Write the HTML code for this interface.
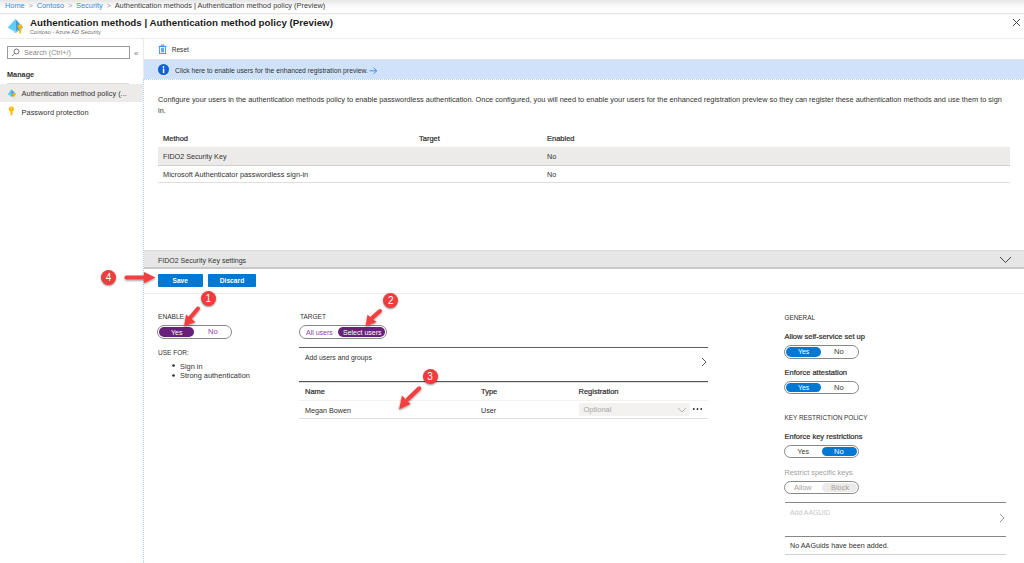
<!DOCTYPE html>
<html><head><meta charset="utf-8">
<style>
*{box-sizing:border-box;margin:0;padding:0}
html,body{width:1024px;height:563px;overflow:hidden;background:#fff}
body{font-family:"Liberation Sans",sans-serif;color:#323130;font-size:7.4px;position:relative}
.a{position:absolute;white-space:nowrap;line-height:1}
.b{font-weight:bold}
.sb{font-weight:normal;-webkit-text-stroke:.22px currentColor}
.ln{position:absolute;height:1px}
.tg{position:absolute;border:1px solid #8a8886;border-radius:7px;background:#fff}
.pill{position:absolute;border-radius:6px}
.circ{position:absolute;width:15px;height:15px;border-radius:50%;background:#f03c3c;color:#fff;font-size:10px;text-align:center;line-height:15px;box-shadow:0 1px 2px rgba(0,0,0,.45)}
</style></head>
<body>
<!-- breadcrumb -->
<div style="position:absolute;left:0;top:0;width:1024px;height:13px;background:linear-gradient(#e6e6e6 0,#f8f8f8 5px,#fff 10px)"></div>
<div class="ln" style="left:0;top:13px;width:1024px;background:#e6e6e6;box-shadow:0 1px 1px rgba(0,0,0,.04)"></div>
<div class="a" style="left:5px;top:1.8px;font-size:7.4px;color:#3c3c3c">
<span style="color:#3a8ad8">Home</span><span style="color:#a19f9d;padding:0 3.7px 0 3.9px">&gt;</span><span style="color:#3a8ad8">Contoso</span><span style="color:#a19f9d;padding:0 3.7px 0 3.9px">&gt;</span><span style="color:#3a8ad8">Security</span><span style="color:#a19f9d;padding:0 3.7px 0 3.9px">&gt;</span>Authentication methods | Authentication method policy (Preview)</div>

<!-- header -->
<svg style="position:absolute;left:4px;top:14px" width="24" height="24" viewBox="0 0 24 24">
<polygon points="11.5,5 3.8,13.6 11.5,18.9" fill="#5ccdf5"/>
<polygon points="11.5,5 11.5,18.9 19,13.6" fill="#3a9de8"/>
<polygon points="4.2,13.8 11.5,17 11.5,18.9" fill="#a9e6fb"/>
<polygon points="11.5,17 17,14.5 19,13.6 11.5,18.9" fill="#7cc7f2"/>
<circle cx="15.9" cy="12.6" r="2.4" fill="#f7b500"/>
<rect x="15.1" y="12.6" width="1.7" height="6.8" fill="#f7b500"/>
<rect x="16.6" y="15.6" width="1" height="1" fill="#f7b500"/>
<circle cx="15.9" cy="11.6" r=".6" fill="#ffe08a"/>
</svg>
<div class="a b" style="left:30px;top:18px;font-size:9.77px;color:#1b1a19">Authentication methods | Authentication method policy (Preview)</div>
<div class="a" style="left:30px;top:29.8px;font-size:5.6px;color:#6f6d6b">Contoso - Azure AD Security</div>
<svg style="position:absolute;left:1012px;top:18px" width="9" height="9" viewBox="0 0 9 9"><path d="M1 1L8 8M8 1L1 8" stroke="#444" stroke-width="1"/></svg>
<div class="ln" style="left:0;top:38px;width:1024px;background:#edebe9"></div>

<!-- left nav -->
<div style="position:absolute;left:7px;top:46px;width:123px;height:13px;border:1px solid #9a9a9a;background:#fff"></div>
<svg style="position:absolute;left:11px;top:48px" width="9" height="9" viewBox="0 0 9 9"><circle cx="5.5" cy="3.5" r="2.5" fill="none" stroke="#666" stroke-width=".9"/><path d="M3.7 5.3L1 8" stroke="#666" stroke-width=".9"/></svg>
<div class="a" style="left:24px;top:48.5px;color:#8a8886;font-size:7.2px">Search (Ctrl+/)</div>
<div class="a" style="left:134px;top:50px;color:#7a7a7a;font-size:8px">«</div>
<div class="a b" style="left:7px;top:71px;font-size:7.3px;color:#323130">Manage</div>
<div class="ln" style="left:7px;top:83px;width:122px;background:#e1dfdd"></div>
<div style="position:absolute;left:0;top:84px;width:143px;height:18px;background:#edebe9"></div>
<svg style="position:absolute;left:7px;top:88px" width="10" height="11" viewBox="0 0 10 11"><polygon points="4.4,1.2 0.8,6.2 4.4,9" fill="#5ccdf5"/><polygon points="4.4,1.2 4.4,9 9,6.2" fill="#3a9de8"/><polygon points="1,6.3 4.4,8 4.4,9" fill="#a9e6fb"/><circle cx="6.9" cy="6.2" r="1.5" fill="#f7b500"/><rect x="6.4" y="6.2" width="1" height="3.6" fill="#f7b500"/></svg>
<div class="a" style="left:21.6px;top:90px;font-size:7.4px">Authentication method policy (...</div>
<svg style="position:absolute;left:8px;top:106px" width="7" height="11" viewBox="0 0 7 11"><circle cx="3.4" cy="3.1" r="2.6" fill="#ffb900"/><circle cx="3.4" cy="2.4" r=".7" fill="#ffe9a8"/><rect x="2.6" y="4" width="1.6" height="5.4" fill="#ffb900"/><rect x="4" y="6.8" width="1" height="1" fill="#ffb900"/></svg>
<div class="a" style="left:21.6px;top:108.5px;font-size:7.4px">Password protection</div>
<div style="position:absolute;left:143px;top:38px;width:1px;height:41px;background:#ebebeb"></div>

<!-- toolbar -->
<svg style="position:absolute;left:158px;top:44px" width="9" height="11" viewBox="0 0 9 11"><path d="M.6 2.3H8.4" stroke="#3d8fe0" stroke-width=".9"/><rect x="3.2" y=".9" width="2.6" height="1.3" fill="none" stroke="#3d8fe0" stroke-width=".7"/><rect x="1.4" y="2.6" width="6.2" height="7" fill="none" stroke="#3d8fe0" stroke-width=".9"/><rect x="2.9" y="3.8" width="3.2" height="4.6" fill="#6aa8e8"/></svg>
<div class="a" style="left:171.7px;top:46.9px;font-size:6.6px">Reset</div>

<!-- info bar -->
<div style="position:absolute;left:144px;top:59px;width:880px;height:20px;background:#cfe2fa;border-top:1px solid #e3e3e3"></div>
<svg style="position:absolute;left:158px;top:64px" width="11" height="11" viewBox="0 0 11 11"><circle cx="5.5" cy="5.5" r="5.5" fill="#0f5fd6"/><rect x="4.8" y="4.5" width="1.5" height="4.5" fill="#fff"/><circle cx="5.5" cy="2.9" r=".9" fill="#fff"/></svg>
<div class="a" style="left:175px;top:67.5px;font-size:6.77px;color:#323130">Click here to enable users for the enhanced registration preview.</div>
<svg style="position:absolute;left:369px;top:66px" width="9" height="9" viewBox="0 0 9 9"><path d="M.6 4.8H7.6M4.6 1.7L7.7 4.8L4.6 7.9" fill="none" stroke="#2b7fd9" stroke-width=".85"/></svg>

<!-- dotted focus outline -->
<div style="position:absolute;left:143px;top:79px;width:882px;height:490px;border:1px dotted #a8dcf6"></div>

<!-- description -->
<div class="a" style="left:158px;top:96px;font-size:7.35px">Configure your users in the authentication methods policy to enable passwordless authentication. Once configured, you will need to enable your users for the enhanced registration preview so they can register these authentication methods and use them to sign</div>
<div class="a" style="left:158px;top:106.5px;font-size:7.35px">in.</div>

<!-- methods table -->
<div class="a sb" style="left:163px;top:134.5px;font-size:7.5px">Method</div>
<div class="a sb" style="left:419px;top:134.5px;font-size:7.5px">Target</div>
<div class="a sb" style="left:547px;top:134.5px;font-size:7.5px">Enabled</div>
<div style="position:absolute;left:158px;top:147px;width:852px;height:18px;background:#edebe9"></div>
<div class="ln" style="left:158px;top:165px;width:852px;background:#d2d0ce"></div>
<div class="a" style="left:163px;top:153px;font-size:7.2px">FIDO2 Security Key</div>
<div class="a" style="left:547px;top:153px;font-size:7.2px">No</div>
<div class="a" style="left:163px;top:171px;font-size:7.37px">Microsoft Authenticator passwordless sign-in</div>
<div class="a" style="left:547px;top:171px;font-size:7.2px">No</div>
<div class="ln" style="left:158px;top:182px;width:852px;background:#e1dfdd"></div>

<!-- settings bar -->
<div style="position:absolute;left:144px;top:250px;width:880px;height:19px;background:#e6e6e6;border-top:1px solid #dadada;border-bottom:2px solid #c8c8c8"></div>
<div class="a" style="left:158px;top:256.5px;font-size:7.03px">FIDO2 Security Key settings</div>
<svg style="position:absolute;left:999px;top:256px" width="13" height="8" viewBox="0 0 13 8"><path d="M1 1L6.5 6.5L12 1" fill="none" stroke="#444" stroke-width="1"/></svg>

<!-- buttons -->
<div style="position:absolute;left:158px;top:274px;width:45px;height:13px;background:#0078d4;border-radius:1px"></div>
<div class="a b" style="left:172.5px;top:278px;font-size:6.6px;color:#fff">Save</div>
<div style="position:absolute;left:208px;top:274px;width:48px;height:13px;background:#0078d4;border-radius:1px"></div>
<div class="a b" style="left:219.7px;top:278px;font-size:6.7px;color:#fff">Discard</div>
<div class="ln" style="left:144px;top:293px;width:880px;background:#edebe9"></div>

<!-- enable -->
<div class="a" style="left:158px;top:314.2px;font-size:6.6px">ENABLE</div>
<div class="tg" style="left:157px;top:325px;width:75px;height:14px"></div>
<div class="pill" style="left:159px;top:327px;width:35px;height:10px;background:#68217a"></div>
<div class="a" style="left:171px;top:328.5px;font-size:7px;color:#fff">Yes</div>
<div class="a" style="left:208px;top:328.2px;font-size:7.6px;color:#8e44ad">No</div>
<div class="a" style="left:158px;top:349.5px;font-size:6.5px">USE FOR:</div>
<svg style="position:absolute;left:171px;top:363px" width="5" height="5"><circle cx="2.5" cy="2.5" r="1.35" fill="#323130"/></svg>
<div class="a" style="left:180px;top:362.5px;font-size:7.4px">Sign in</div>
<svg style="position:absolute;left:171px;top:373px" width="5" height="5"><circle cx="2.5" cy="2.5" r="1.35" fill="#323130"/></svg>
<div class="a" style="left:180px;top:372px;font-size:7.4px">Strong authentication</div>

<!-- target -->
<div class="a" style="left:300px;top:314.2px;font-size:6.5px">TARGET</div>
<div class="tg" style="left:299px;top:325px;width:88px;height:14px"></div>
<div class="pill" style="left:338px;top:327px;width:47px;height:10px;background:#68217a"></div>
<div class="a" style="left:306px;top:328.5px;font-size:7px;color:#8e44ad">All users</div>
<div class="a" style="left:343px;top:328.5px;font-size:7px;color:#fff">Select users</div>
<div class="ln" style="left:299px;top:347px;width:409px;background:#605e5c"></div>
<div class="a" style="left:305px;top:354.7px;font-size:6.83px">Add users and groups</div>
<svg style="position:absolute;left:701px;top:357px" width="6" height="10" viewBox="0 0 6 10"><path d="M1 1L5 5L1 9" fill="none" stroke="#444" stroke-width=".9"/></svg>
<div class="ln" style="left:299px;top:380.5px;width:409px;height:1px;background:#555;box-shadow:0 .5px 0 rgba(0,0,0,.25)"></div>
<div class="a sb" style="left:305px;top:388px;font-size:7.5px">Name</div>
<div class="a sb" style="left:481px;top:388px;font-size:7.5px">Type</div>
<div class="a sb" style="left:578.5px;top:388px;font-size:7.5px">Registration</div>
<div class="ln" style="left:299px;top:400px;width:409px;background:#f3f2f1"></div>
<div class="a" style="left:305px;top:406.5px;font-size:7.2px">Megan Bowen</div>
<div class="a" style="left:481px;top:406.5px;font-size:7.2px">User</div>
<div style="position:absolute;left:578.5px;top:403px;width:111px;height:13px;background:#f3f2f1"></div>
<div class="a" style="left:583.5px;top:405.5px;font-size:7.5px;color:#a8a6a4">Optional</div>
<svg style="position:absolute;left:677px;top:407px" width="10" height="6" viewBox="0 0 10 6"><path d="M1 1L5 5L9 1" fill="none" stroke="#a19f9d" stroke-width=".8"/></svg>
<svg style="position:absolute;left:692px;top:407px" width="12" height="4" viewBox="0 0 12 4"><circle cx="1.8" cy="2" r=".95" fill="#323130"/><circle cx="5.5" cy="2" r=".95" fill="#323130"/><circle cx="9.2" cy="2" r=".95" fill="#323130"/></svg>
<div class="ln" style="left:299px;top:418px;width:409px;background:#e1dfdd"></div>

<!-- right column -->
<div class="a" style="left:784.5px;top:314.5px;font-size:6.4px">GENERAL</div>
<div class="a sb" style="left:784.5px;top:332.9px;font-size:7.5px">Allow self-service set up</div>
<div class="tg" style="left:784px;top:345px;width:75px;height:14px"></div>
<div class="pill" style="left:786px;top:347px;width:35px;height:10px;background:#0078d4"></div>
<div class="a" style="left:798px;top:348.5px;font-size:6.9px;color:#fff">Yes</div>
<div class="a" style="left:834px;top:348.3px;font-size:7.6px;color:#3b3a39">No</div>

<div class="a sb" style="left:784.5px;top:369.1px;font-size:7.5px">Enforce attestation</div>
<div class="tg" style="left:784px;top:381px;width:75px;height:13px"></div>
<div class="pill" style="left:786px;top:383px;width:35px;height:9px;background:#0078d4"></div>
<div class="a" style="left:798px;top:384.6px;font-size:6.9px;color:#fff">Yes</div>
<div class="a" style="left:834px;top:383.8px;font-size:7.6px;color:#3b3a39">No</div>

<div class="a" style="left:784.5px;top:414.5px;font-size:6.4px">KEY RESTRICTION POLICY</div>
<div class="a sb" style="left:784.5px;top:433px;font-size:7.5px">Enforce key restrictions</div>
<div class="tg" style="left:784px;top:445px;width:75px;height:13px"></div>
<div class="pill" style="left:822px;top:447px;width:35px;height:9px;background:#0078d4"></div>
<div class="a" style="left:797.5px;top:448px;font-size:7px;color:#3b3a39">Yes</div>
<div class="a" style="left:834px;top:447.8px;font-size:7.6px;color:#fff">No</div>

<div class="a" style="left:784.5px;top:468.8px;font-size:7.3px;color:#a19f9d">Restrict specific keys</div>
<div class="tg" style="left:784px;top:481px;width:75px;height:13px;border-color:#8a8886"></div>
<div class="pill" style="left:822px;top:483px;width:35px;height:9px;background:#edebe9"></div>
<div class="a" style="left:794px;top:483.8px;font-size:7.4px;color:#a19f9d">Allow</div>
<div class="a" style="left:831px;top:483.8px;font-size:7.4px;color:#a19f9d">Block</div>

<div class="ln" style="left:785px;top:502px;width:221px;background:#8a8886"></div>
<div class="a" style="left:790px;top:510px;font-size:6.9px;color:#c8c6c4">Add AAGUID</div>
<svg style="position:absolute;left:999px;top:513px" width="6" height="10" viewBox="0 0 6 10"><path d="M1 1L5 5L1 9" fill="none" stroke="#8a8886" stroke-width=".9"/></svg>
<div class="ln" style="left:785px;top:535.5px;width:221px;background:#8a8886"></div>
<div class="a" style="left:790px;top:542px;font-size:7.2px">No AAGuids have been added.</div>
<div class="ln" style="left:785px;top:554px;width:221px;background:#d2d0ce"></div>

<!-- annotations -->
<svg style="position:absolute;left:0;top:0" width="1024" height="563" viewBox="0 0 1024 563">
<defs><filter id="sh" x="-50%" y="-50%" width="200%" height="200%"><feDropShadow dx="0" dy="1" stdDeviation="0.8" flood-color="#000" flood-opacity=".45"/></filter></defs>
<g fill="#f24141" stroke="#f24141" filter="url(#sh)">
<line x1="126.5" y1="277.6" x2="146" y2="277.6" stroke-width="4" stroke-linecap="round"/>
<polygon points="144,272 155.5,277.6 144,283.2" stroke="none"/>
<line x1="198" y1="308.5" x2="190" y2="318" stroke-width="4" stroke-linecap="round"/>
<polygon points="186,314.5 195.5,322 184,326.5" stroke="none"/>
<line x1="380" y1="311" x2="372" y2="318" stroke-width="4" stroke-linecap="round"/>
<polygon points="367.5,314.8 376.5,322 365.5,326.5" stroke="none"/>
<line x1="419.3" y1="388.3" x2="408" y2="399" stroke-width="4" stroke-linecap="round"/>
<polygon points="402,395.5 410.5,404 399,409.5" stroke="none"/>
</g>
</svg>
<div class="circ" style="left:101px;top:270px">4</div>
<div class="circ" style="left:200.8px;top:290.8px">1</div>
<div class="circ" style="left:383.3px;top:292.6px">2</div>
<div class="circ" style="left:422.5px;top:369px">3</div>
</body></html>
